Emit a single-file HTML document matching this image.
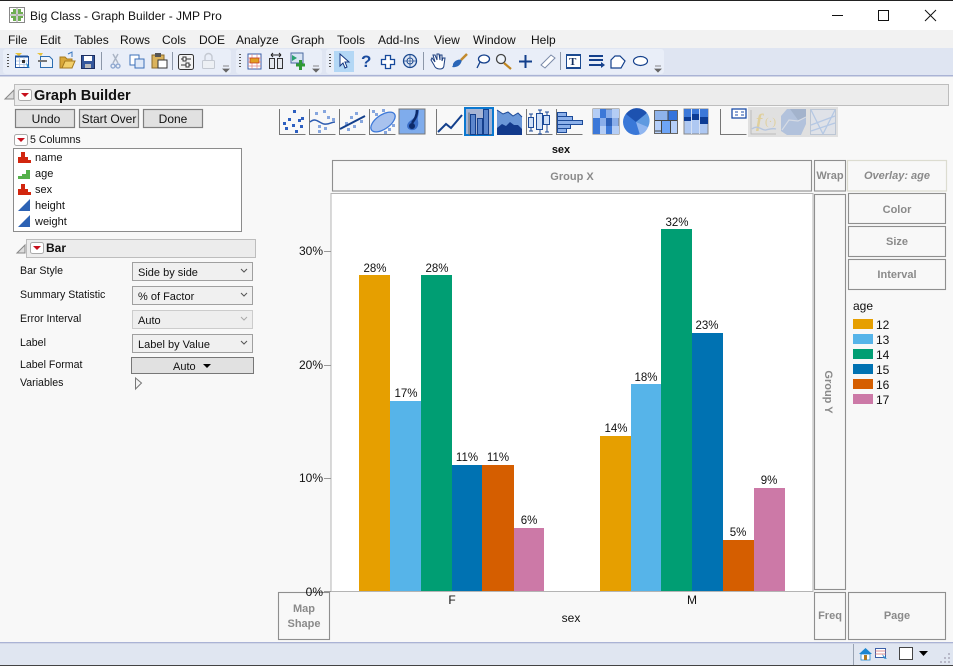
<!DOCTYPE html>
<html><head><meta charset="utf-8"><title>Big Class - Graph Builder - JMP Pro</title>
<style>
html,body{margin:0;padding:0;background:#f8f8f8;width:953px;height:666px;overflow:hidden}
svg{display:block;font-family:"Liberation Sans",sans-serif;font-size:12px;fill:#000}
.m{font-size:12px;fill:#111}
.g{font-size:11px;font-weight:bold;fill:#8a8a8a;text-anchor:middle}
.b{fill:#e1e1e1;stroke:#7f7f7f;stroke-width:1.2}
.z{fill:none;stroke:#8f8f8f;stroke-width:1.1}
.t{font-size:11px;fill:#111}
.o{font-size:10.6px;fill:#111}
.p{font-size:11.5px;fill:#111;text-anchor:middle}
.s{fill:#f0f0f0;stroke:#a0a0a0}
.ax{fill:none;stroke:#777;stroke-width:1}
</style></head><body>
<svg width="953" height="666" viewBox="0 0 953 666" xmlns="http://www.w3.org/2000/svg">
<rect width="953" height="666" fill="#f8f8f8"/>
<!-- Title bar -->
<rect width="953" height="30" fill="#fff"/>
<rect width="953" height="1" fill="#222"/>
<rect x="9.500" y="7.500" width="15" height="15" fill="#fff" stroke="#888"/>
<path d="M17 8v14M10 15h14" stroke="#999"/>
<path d="M11 14v-2h2v-3h3v5zM18 9h3v3h2v2h-5zM11 16h5v5h-3v-3h-2zM18 16h5v2h-2v3h-3z" fill="#6fae52"/>
<text x="30" y="20" font-size="12" fill="#111">Big Class - Graph Builder - JMP Pro</text>
<path d="M832 15.500h11" stroke="#111"/>
<rect x="878.500" y="10.500" width="10" height="10" fill="none" stroke="#111"/>
<path d="M925 10l11 11M936 10l-11 11" stroke="#111"/>
<!-- Menu -->
<rect y="30" width="953" height="18" fill="#f2f2f2"/>
<text class="m" x="8" y="44">File</text>
<text class="m" x="40" y="44">Edit</text>
<text class="m" x="74" y="44">Tables</text>
<text class="m" x="120" y="44">Rows</text>
<text class="m" x="162" y="44">Cols</text>
<text class="m" x="199" y="44">DOE</text>
<text class="m" x="236" y="44">Analyze</text>
<text class="m" x="291" y="44">Graph</text>
<text class="m" x="337" y="44">Tools</text>
<text class="m" x="378" y="44">Add-Ins</text>
<text class="m" x="434" y="44">View</text>
<text class="m" x="473" y="44">Window</text>
<text class="m" x="531" y="44">Help</text>
<!-- Toolbar -->
<rect y="48" width="953" height="27" fill="#dfe5f2"/>
<rect x="3" y="49" width="228" height="25" rx="3" fill="#e9eef8"/>
<rect x="236" y="49" width="86" height="25" rx="3" fill="#e9eef8"/>
<rect x="326" y="49" width="338" height="25" rx="3" fill="#e9eef8"/>
<rect y="75" width="953" height="1.500" fill="#aab3d5"/>
<path d="M8 54v1M8 57v1M8 60v1M8 63v1M8 66v1M240 54v1M240 57v1M240 60v1M240 63v1M240 66v1M330 54v1M330 57v1M330 60v1M330 63v1M330 66v1" stroke="#555" stroke-width="2"/>
<path d="M101.500 52v18M172.500 52v18M423.500 52v18M560.500 52v18" stroke="#8c97a8"/>
<path d="M223 66h6M223 69h6l-3 3zM313 66h6M313 69h6l-3 3zM655 66h6M655 69h6l-3 3z" stroke="#666" fill="#666" stroke-width=".8"/>
<!-- file icons -->
<rect x="15.500" y="56.500" width="13" height="11" fill="#fff" stroke="#1b4f9c"/><path d="M15 56.500h13" stroke="#1b4f9c" stroke-width="2"/><path d="M19.500 57v10M24 57v10M16 61h12M16 64.500h12" stroke="#a8c0e4" stroke-width=".8"/><path d="M15 53l4 3 3-3z" fill="#e8c23a"/><rect x="22" y="60" width="3" height="3" fill="#333"/><path d="M26 62l4 6-3-1z" fill="#2a8fd0"/>
<path d="M40.500 56.500h9l3 3v8h-12z" fill="#eef4fb" stroke="#2c6db0"/><path d="M37 53l4 3 2-3z" fill="#e8c23a"/><rect x="38" y="60" width="9" height="2" fill="#777"/>
<path d="M60 57h5l2 2h5v9h-12z" fill="#d9a83a" stroke="#a67a1e"/><path d="M62 68l3-7h10l-3 7z" fill="#f2cf6a" stroke="#a67a1e"/><path d="M68 54l4-2v5" stroke="#3c78c0" fill="none"/>
<rect x="81.500" y="55.500" width="13" height="13" fill="#34579c" stroke="#1c2e60"/><rect x="84" y="56" width="8" height="5" fill="#fff"/><rect x="85" y="64" width="6" height="4" fill="#bbb"/>
<!-- cut copy paste -->
<path d="M113 54l5 9M118 54l-5 9" stroke="#aab4c4" stroke-width="1.400"/><circle cx="113" cy="66" r="2" fill="none" stroke="#8fa8d0" stroke-width="1.400"/><circle cx="118" cy="66" r="2" fill="none" stroke="#8fa8d0" stroke-width="1.400"/>
<rect x="130" y="55" width="9" height="10" fill="#fff" stroke="#3c70b8"/><rect x="135" y="59" width="9" height="9" fill="#dfe9f8" stroke="#3c70b8"/>
<rect x="152" y="55" width="12" height="13" fill="#dbb35c" stroke="#8a6a2a"/><rect x="155" y="53" width="6" height="4" fill="#555"/><rect x="158" y="60" width="9" height="8" fill="#fff" stroke="#333"/>
<rect x="178.500" y="54.500" width="15" height="15" rx="2" fill="#f4f4f4" stroke="#333"/><path d="M181 59h10M181 65h10" stroke="#333"/><rect x="183" y="57" width="3" height="4" fill="#fff" stroke="#333"/><rect x="186" y="63" width="3" height="4" fill="#fff" stroke="#333"/>
<rect x="202.500" y="60.500" width="12" height="8" rx="1" fill="#edf0f4" stroke="#c4c9d2"/><path d="M205 60v-3a3.500 3.500 0 0 1 7 0v3" fill="none" stroke="#c4c9d2" stroke-width="1.400"/>
<!-- second group -->
<rect x="248" y="54" width="13" height="15" fill="#fff" stroke="#3c5fa8"/><path d="M248 58h13M248 62h13M248 66h13M252 54v15M257 54v15" stroke="#e08585" stroke-width=".7"/><rect x="250" y="58" width="9" height="5" fill="#e0a020" stroke="#c03020" stroke-width=".7"/>
<rect x="269.500" y="58.500" width="5" height="10" fill="#e4e8ee" stroke="#333"/><rect x="277.500" y="58.500" width="5" height="10" fill="#e4e8ee" stroke="#333"/><path d="M271 55h10M271 55l2-2M271 55l2 2M281 55l-2-2M281 55l-2 2" stroke="#222" fill="none"/>
<rect x="291" y="53" width="12" height="10" fill="#d8e4f4" stroke="#4a6aa0"/><path d="M292 55l5 3-5 3z" fill="#2aa070"/><path d="M296 65h9M300.500 60v10" stroke="#2f9a35" stroke-width="3"/>
<!-- tools -->
<rect x="334" y="51" width="20" height="21" fill="#b3d7f5"/>
<path d="M340 54v12l3-3 2 5 2-1-2-5h4z" fill="#fff" stroke="#14357f"/>
<text x="361" y="67" font-size="17" font-weight="bold" fill="#1c4da0">?</text>
<path d="M385.500 55.500h5v4h4v5h-4v4h-5v-4h-4v-5h4z" fill="#fff" stroke="#174a9c" stroke-width="1.300"/>
<circle cx="410" cy="61" r="6.500" fill="#dde6f5" stroke="#1c4a90" stroke-width="1.300"/><circle cx="410" cy="61" r="3" fill="#fff" stroke="#1c4a90"/><path d="M410 55v12M404 61h12" stroke="#1c4a90" stroke-width=".8"/>
<path d="M431 60l3 5c1 3 3 4 6 4s4-2 4-4l1-7-2 0-1 3 0-6h-2v5l-1-6h-2l0 6-2-5h-2l2 7-3-4z" fill="#fff" stroke="#1c3f80"/>
<path d="M453 64c2-4 6-5 9-4-1 5-5 8-10 7 1-1 1-2 1-3z" fill="#2a66b8"/><path d="M461 60l6-6" stroke="#c28a2e" stroke-width="2.500"/>
<ellipse cx="484" cy="59" rx="5.500" ry="4" fill="#fff" stroke="#14408c" stroke-width="1.300"/><path d="M480 62c-1 2-2 4-3 6" stroke="#14408c" stroke-width="1.300" fill="none"/>
<circle cx="501" cy="59" r="4.500" fill="#eef4fc" stroke="#444" stroke-width="1.300"/><path d="M504 63l7 6" stroke="#c0851f" stroke-width="2.200"/>
<path d="M525.500 55v13M519 61.500h13" stroke="#14408c" stroke-width="2"/>
<path d="M541 65l10-10 4 3-10 10z" fill="#fff" stroke="#7a8aa8"/>
<rect x="566.500" y="54.500" width="14" height="14" fill="#fff" stroke="#1c4a90"/><rect x="566" y="54" width="15" height="2" fill="#1c4a90"/><rect x="566" y="67" width="15" height="2" fill="#1c4a90"/><text x="569" y="65" font-family="Liberation Serif" font-weight="bold" font-size="11" fill="#14305f">T</text>
<path d="M589 56h14M589 60h14M589 65h12" stroke="#14408c" stroke-width="2"/><path d="M601 62l4 3-4 3z" fill="#14408c"/>
<path d="M615 56h5l5 5-4 7h-10v-8z" fill="#fff" stroke="#14408c" stroke-width="1.200"/>
<ellipse cx="640.500" cy="61" rx="7" ry="4.500" fill="#fff" stroke="#14408c" stroke-width="1.200"/>
<!-- Outline header -->
<path d="M5 99l9-9v9z" fill="#ddd" stroke="#888"/>
<rect x="14.500" y="84.500" width="934" height="21" fill="#ececec" stroke="#bdbdbd"/>
<rect x="18.500" y="89.500" width="13" height="11" rx="2" fill="#fff" stroke="#aaa"/><path d="M21 93h8l-4 4z" fill="#c8101c"/>
<text x="34" y="100" font-size="14.500" font-weight="bold" fill="#111">Graph Builder</text>
<!-- Buttons -->
<rect class="b" x="15.500" y="109.500" width="59" height="18"/><text x="46" y="123" text-anchor="middle" class="m">Undo</text>
<rect class="b" x="79.500" y="109.500" width="59" height="18"/><text x="109" y="123" text-anchor="middle" class="m">Start Over</text>
<rect class="b" x="143.500" y="109.500" width="59" height="18"/><text x="173" y="123" text-anchor="middle" class="m">Done</text>
<!-- Columns -->
<rect x="14.500" y="134.500" width="13" height="11" rx="2" fill="#fff" stroke="#aaa"/><path d="M17 138h8l-4 4z" fill="#c8101c"/>
<text class="o" x="30" y="143">5 Columns</text>
<rect x="13.500" y="148.500" width="228" height="83" fill="#fff" stroke="#8c8c8c"/>
<path d="M18 163v-6h3v-5h4v5h3v3h3v3z" fill="#d2260f"/>
<path d="M18 179v-3h4v-2h4v-4h4v9z" fill="#54b04a"/>
<path d="M18 195v-6h3v-5h4v5h3v3h3v3z" fill="#d2260f"/>
<path d="M18 211l12-12v12z" fill="#2c62b4"/>
<path d="M18 227l12-12v12z" fill="#2c62b4"/>
<text class="t" x="35" y="161">name</text><text class="t" x="35" y="177">age</text><text class="t" x="35" y="193">sex</text><text class="t" x="35" y="209">height</text><text class="t" x="35" y="225">weight</text>
<!-- Bar outline -->
<path d="M17 253l8-8v8z" fill="#ddd" stroke="#888"/>
<rect x="26.500" y="239.500" width="229" height="18" fill="#ececec" stroke="#bdbdbd"/>
<rect x="30.500" y="242.500" width="13" height="11" rx="2" fill="#fff" stroke="#aaa"/><path d="M33 246h8l-4 4z" fill="#c8101c"/>
<text x="46" y="252" font-size="12" font-weight="bold" fill="#111">Bar</text>
<!-- Options -->
<text class="o" x="20" y="274">Bar Style</text>
<text class="o" x="20" y="298">Summary Statistic</text>
<text class="o" x="20" y="322">Error Interval</text>
<text class="o" x="20" y="346">Label</text>
<text class="o" x="20" y="368">Label Format</text>
<text class="o" x="20" y="386">Variables</text>
<rect class="s" x="132.500" y="262.500" width="120" height="18"/><text class="t" x="138" y="276">Side by side</text><path d="M241 269l3 3 3-3" fill="none" stroke="#555"/>
<rect class="s" x="132.500" y="286.500" width="120" height="18"/><text class="t" x="138" y="300">% of Factor</text><path d="M241 293l3 3 3-3" fill="none" stroke="#555"/>
<rect x="132.500" y="310.500" width="120" height="18" fill="#eeeeee" stroke="#ccc"/><text class="t" x="138" y="324">Auto</text><path d="M241 317l3 3 3-3" fill="none" stroke="#aaa"/>
<rect class="s" x="132.500" y="334.500" width="120" height="18"/><text class="t" x="138" y="348">Label by Value</text><path d="M241 341l3 3 3-3" fill="none" stroke="#555"/>
<rect x="131.500" y="357.500" width="122" height="16" fill="#e1e1e1" stroke="#777"/><text class="t" x="173" y="370">Auto</text><path d="M203 364h8l-4 4z" fill="#000"/>
<path d="M135.500 378l6 5-6 6z" fill="#f4f4f4" stroke="#777"/>
<!-- Graph type icons -->
<path class="ax" d="M279.500 109v25.500h26M309.500 109v25.500h26M339.500 109v25.500h26M369.500 109v25.500h26M436.500 109v25.500h26M526.500 109v25.500h26M556.500 109v25.500h26M720.500 109v25.500h26"/>
<path d="M293 110h3v3h-3zM283 122h3v3h-3zM288 118h3v3h-3zM301 117h3v3h-3zM292 124h3v3h-3zM300 125h3v3h-3zM298 119h3v3h-3zM285 127h3v3h-3zM295 130h3v3h-3z" fill="#2d5fc0"/>
<path d="M315 112h3v3h-3zM323 110h3v3h-3zM327 116h3v3h-3zM332 118h3v3h-3zM318 125h3v3h-3zM324 127h3v3h-3zM318 130h3v3h-3z" fill="#86a6de"/>
<path d="M310 122c6-5 9 1 14 2s7-2 11-2" fill="none" stroke="#2c5bb0" stroke-width="1.500"/>
<path d="M345 122h3v3h-3zM350 116h3v3h-3zM355 112h3v3h-3zM347 128h3v3h-3zM353 125h3v3h-3zM360 120h3v3h-3z" fill="#86a6de"/>
<path d="M340 129l25-13" stroke="#14408c" stroke-width="2"/>
<path d="M372 110h3v3h-3zM382 109h3v3h-3zM375 113h3v3h-3zM388 128h3v3h-3zM384 131h3v3h-3zM392 124h3v3h-3z" fill="#86a6de"/>
<ellipse cx="383" cy="122" rx="14" ry="7" transform="rotate(-35 383 122)" fill="#a8c2ee" stroke="#3c78d8" stroke-width="1.300"/>
<rect x="399" y="109" width="26" height="25" fill="#7facec" stroke="#777"/><path d="M417 110c0 6-3 8-7 11-4 3-4 8 1 9 6 1 8-5 7-9-1-3 1-6 1-11z" fill="#3a6ec8"/><circle cx="412" cy="126" r="3" fill="#0c2a6a"/><path d="M417 110c0 6-2 9-5 13" stroke="#0c2a6a" stroke-width="2.500" fill="none"/>
<path d="M438 132l8-8 5 4 11-13" fill="none" stroke="#14408c" stroke-width="2"/>
<rect x="465" y="108" width="28" height="27" fill="#a6b4d4" stroke="#0a78d0" stroke-width="2"/>
<path d="M469 134.500v-22M469 134.500h22" stroke="#666" fill="none"/>
<rect x="470.500" y="114.500" width="5" height="20" fill="#5c86cc" stroke="#143f8c"/><rect x="477.500" y="118.500" width="5" height="16" fill="#5c86cc" stroke="#143f8c"/><rect x="483.500" y="109.500" width="5" height="25" fill="#5c86cc" stroke="#143f8c"/>
<path d="M497 135v-25l6 4 5-2 5 4 5-3 4 4v18z" fill="#6a97d8"/><path d="M497 135v-7l5-4 4 2 4-4 4 3 4 0 4 4v6z" fill="#123a8c"/><path d="M497 110l6 4 5-2 5 4 5-3 4 4" fill="none" stroke="#1c4a98"/>
<path d="M531 114v17M529 114h4M529 131h4M540 110v24M538 110h4M538 134h4M547 112v20M545 112h4M545 132h4" stroke="#1c4a98" fill="none"/>
<rect x="528.500" y="117.500" width="5" height="10" fill="#cfe0f8" stroke="#1c4a98"/><rect x="536.500" y="113.500" width="6" height="16" fill="#cfe0f8" stroke="#1c4a98"/><rect x="543.500" y="115.500" width="6" height="9" fill="#cfe0f8" stroke="#1c4a98"/>
<path d="M557.500 112.500h9v4h6v4h10v4h-12v4h-4v4h-9z" fill="#8db1ea" stroke="#1c4a98"/><path d="M557 116.500h15M557 120.500h25M557 124.500h13M557 128.500h9" stroke="#1c4a98"/>
<rect x="593" y="109" width="26" height="25" fill="#8aaeea" stroke="#777"/>
<path d="M600 109h6v9h-6zM606 118h6v8h-6zM593 118h7v8h-7zM606 126h6v8h-6zM593 126h7v8h-7z" fill="#3c78d8"/><path d="M612 109h7v9h-7zM593 109h7v9h-7zM600 126h6v8h-6zM612 126h7v8h-7z" fill="#b4cdf5"/><rect x="606" y="118" width="6" height="8" fill="#2d60b8"/>
<circle cx="636" cy="122" r="13" fill="#3a78d8"/><path d="M636 122l-10-8a13 13 0 0 1 21-1z" fill="#1d52b0"/><path d="M636 122l11-9a13 13 0 0 1 1 14z" fill="#5f9ae0"/><path d="M636 122l12 5a13 13 0 0 1-8 8z" fill="#90b6f0"/>
<rect x="654.500" y="110.500" width="23" height="23" fill="#fff" stroke="#666"/>
<rect x="655" y="111" width="13" height="9" fill="#8fb3ea"/><rect x="668" y="111" width="9" height="9" fill="#3574dc"/><rect x="655" y="121" width="6" height="12" fill="#b5cffa"/><rect x="662" y="121" width="8" height="12" fill="#6ea5f7"/><rect x="671" y="121" width="6" height="12" fill="#b5cffa"/><path d="M655 120.500h22M668 111v9M661.500 121v12M670.500 121v12M655 131h6" stroke="#444" stroke-width="1"/>
<rect x="684" y="109" width="24" height="25" fill="#aec8f2" stroke="#888"/><path d="M684 109h7v8h-7zM692 109h7v5h-7zM700 109h8v8h-8z" fill="#3c78d8"/><path d="M684 117h7v4h-7zM692 114h7v6h-7zM700 117h8v7h-8z" fill="#0d3c94"/><path d="M691.500 109v25M699.500 109v25" stroke="#d4e0f4"/>
<rect x="732" y="109" width="14" height="9" fill="#fff" stroke="#1c4da8" stroke-width="1.300"/><path d="M735 112h3M741 112h3M735 115h3M741 115h3" stroke="#1c4da8"/>
<rect x="748" y="107" width="90" height="30" fill="#e0e0e0"/>
<text x="756" y="127" font-family="Liberation Serif" font-style="italic" font-weight="bold" font-size="19" fill="#dfcf9c">f</text><text x="765" y="125" font-family="Liberation Serif" font-size="11" fill="#dfcf9c">(·)</text>
<path d="M751 110v24h25" fill="none" stroke="#bbb"/><path d="M752 129c6-5 10 2 14 1s6-2 10-1" fill="none" stroke="#b7c6de" stroke-width="1.400"/>
<path d="M781 116l6-7h19v15l-5 11h-14l-6-4z" fill="#b2c2dc"/><path d="M790 109h16v9l-8 2z" fill="#a3b3cc"/><path d="M782 130l7-10 9 1 8-4" stroke="#d6dbe4" fill="none" stroke-width="1.200"/>
<rect x="810.500" y="109.500" width="25" height="25" fill="#dfe2e8" stroke="#bcc6d4"/><path d="M811 110l12 24M811 125l24-9M811 131l24-8M835 110l-12 24" stroke="#b5c8e4" stroke-width="1.300" fill="none"/>
<text x="561" y="153" text-anchor="middle" font-size="11" font-weight="bold" fill="#111">sex</text>
<!-- Zones -->
<rect class="z" x="332.500" y="160.500" width="479" height="30.500"/><text class="g" x="572" y="180">Group X</text>
<rect class="z" x="814.500" y="160.500" width="31" height="30.500"/><text class="g" x="830" y="179">Wrap</text>
<rect x="847.500" y="160.500" width="99" height="30.500" fill="#f8f8f8" stroke="#dcdcd0" stroke-width="1.200"/><text class="g" x="897" y="179" font-style="italic" font-size="10.500">Overlay: age</text>
<rect class="z" x="814.500" y="194.500" width="31" height="395"/><text class="g" transform="translate(825,392) rotate(90)" x="0" y="0" font-size="10">Group Y</text>
<rect class="z" x="848.500" y="193.500" width="97" height="30"/><text class="g" x="897" y="213">Color</text>
<rect class="z" x="848.500" y="226.500" width="97" height="30"/><text class="g" x="897" y="245">Size</text>
<rect class="z" x="848.500" y="259.500" width="97" height="30"/><text class="g" x="897" y="278">Interval</text>
<rect class="z" x="814.500" y="592.500" width="31" height="47"/><text class="g" x="830" y="619">Freq</text>
<rect class="z" x="848.500" y="592.500" width="97" height="47"/><text class="g" x="897" y="619">Page</text>
<rect class="z" x="278.500" y="592.500" width="51" height="47"/><text class="g" x="304" y="612">Map</text><text class="g" x="304" y="627">Shape</text>
<!-- Plot -->
<rect x="331" y="193.500" width="482" height="398" fill="#fff" stroke="#b4b4b4"/>
<path d="M324 251.500h7M324 365.500h7M324 478.500h7M324 591.500h7" stroke="#999"/>
<text x="323" y="255" text-anchor="end" font-size="12" fill="#111">30%</text>
<text x="323" y="369" text-anchor="end" font-size="12" fill="#111">20%</text>
<text x="323" y="482" text-anchor="end" font-size="12" fill="#111">10%</text>
<text x="323" y="596" text-anchor="end" font-size="12" fill="#111">0%</text>
<g>
<rect x="359" y="275" width="31" height="316" fill="#e69f00"/>
<rect x="390" y="401" width="31" height="190" fill="#56b4e9"/>
<rect x="421" y="275" width="31" height="316" fill="#009e73"/>
<rect x="452" y="465" width="30" height="126" fill="#0072b2"/>
<rect x="482" y="465" width="32" height="126" fill="#d55e00"/>
<rect x="514" y="528" width="30" height="63" fill="#cc79a7"/>
<rect x="600" y="436" width="31" height="155" fill="#e69f00"/>
<rect x="631" y="384" width="30" height="207" fill="#56b4e9"/>
<rect x="661" y="229" width="31" height="362" fill="#009e73"/>
<rect x="692" y="333" width="31" height="258" fill="#0072b2"/>
<rect x="723" y="540" width="31" height="51" fill="#d55e00"/>
<rect x="754" y="488" width="31" height="103" fill="#cc79a7"/>
</g>
<text class="p" x="375" y="272">28%</text><text class="p" x="406" y="397">17%</text><text class="p" x="437" y="272">28%</text><text class="p" x="467" y="461">11%</text><text class="p" x="498" y="461">11%</text><text class="p" x="529" y="524">6%</text>
<text class="p" x="616" y="432">14%</text><text class="p" x="646" y="381">18%</text><text class="p" x="677" y="226">32%</text><text class="p" x="707" y="329">23%</text><text class="p" x="738" y="536">5%</text><text class="p" x="769" y="484">9%</text>
<text x="452" y="604" text-anchor="middle" font-size="12" fill="#111">F</text>
<text x="692" y="604" text-anchor="middle" font-size="12" fill="#111">M</text>
<text x="571" y="622" text-anchor="middle" font-size="12" fill="#111">sex</text>
<!-- Legend -->
<text x="853" y="310" font-size="12" fill="#111">age</text>
<rect x="853" y="319" width="20" height="10" fill="#e69f00"/><text x="876" y="329" font-size="12" fill="#111">12</text>
<rect x="853" y="334" width="20" height="10" fill="#56b4e9"/><text x="876" y="344" font-size="12" fill="#111">13</text>
<rect x="853" y="349" width="20" height="10" fill="#009e73"/><text x="876" y="359" font-size="12" fill="#111">14</text>
<rect x="853" y="364" width="20" height="10" fill="#0072b2"/><text x="876" y="374" font-size="12" fill="#111">15</text>
<rect x="853" y="379" width="20" height="10" fill="#d55e00"/><text x="876" y="389" font-size="12" fill="#111">16</text>
<rect x="853" y="394" width="20" height="10" fill="#cc79a7"/><text x="876" y="404" font-size="12" fill="#111">17</text>
<!-- Status bar -->
<rect y="642" width="953" height="1.500" fill="#aab3d5"/>
<rect y="644" width="953" height="21" fill="#e0e6f1"/>
<rect y="665" width="953" height="1" fill="#444"/>
<path d="M853.500 644v21" stroke="#9aa4b4"/>
<path d="M859 654l6.500-6 6.500 6z" fill="#1c86d0"/><rect x="861" y="654" width="9" height="6" fill="#fff" stroke="#1c86d0" stroke-width=".8"/><rect x="864" y="655" width="3" height="5" fill="#b07a20"/>
<rect x="875.500" y="648.500" width="10" height="9" fill="#fff" stroke="#3c5fa8"/><path d="M875 651h11M875 654h11" stroke="#d87070" stroke-width=".8"/><path d="M882 654l5 5-3-.5z" fill="#2a8fd0"/>
<rect x="899.500" y="647.500" width="13" height="12" fill="#fff" stroke="#444"/>
<path d="M919 651h9l-4.500 5z" fill="#000"/>
<path d="M948 662h2M944 662h2M940 662h2M948 658h2M944 658h2M948 654h2" stroke="#aab" stroke-width="1.500"/>
</svg>
</body></html>
